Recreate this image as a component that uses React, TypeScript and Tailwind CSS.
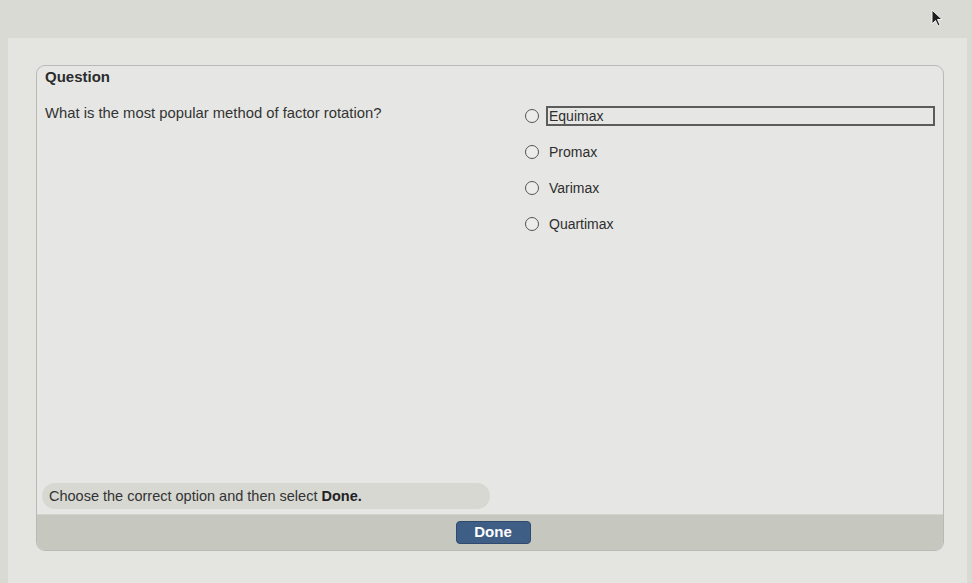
import React, { useState } from "react";

const options = ["Equimax", "Promax", "Varimax", "Quartimax"];

function Radio({ label, focused, checked, onSelect }: { label: string; focused: boolean; checked: boolean; onSelect: () => void }) {
  return (
    <button onClick={onSelect} className="flex items-center h-[20px] w-full text-left">
      <span className="w-[14px] h-[14px] rounded-full border-[1.5px] border-[#555] bg-[#ececea] flex items-center justify-center shrink-0">
        {checked && <span className="w-[7px] h-[7px] rounded-full bg-[#333]" />}
      </span>
      <span
        className={
          "ml-[7px] h-[20px] flex items-center text-[14px] text-[#2e2e2e] " +
          (focused ? "flex-1 border-2 border-[#5c5c5c] pl-[1px]" : "pl-[3px]")
        }
      >
        {label}
      </span>
    </button>
  );
}

export default function App() {
  const [selected, setSelected] = useState<number | null>(null);

  return (
    <div className="w-[972px] h-[583px] bg-[#d9dad3] flex flex-col overflow-hidden" style={{ fontFamily: '"Liberation Sans", Arial, sans-serif' }}>
      <div className="h-[38px] shrink-0 relative">
        <svg className="absolute left-[930px] top-[9px]" width="14" height="18" viewBox="0 0 14 18">
          <path d="M2 1 L2 15 L5.5 11.5 L8 17 L10 16 L7.5 10.5 L12 10.5 Z" fill="#1e1e1e" stroke="#f2f2f2" strokeWidth="1" />
        </svg>
      </div>
      <div className="flex-1 ml-[8px] mr-[5px] bg-[#e4e5e1] pl-[28px] pr-[23px] pt-[27px]">
        <div className="h-[486px] rounded-[9px] border border-[#b9bab5] bg-[#e6e7e4] flex flex-col overflow-hidden">
          <div className="flex-1 flex flex-col">
            <div className="flex-1 flex">
              <div className="w-[488px] pl-[8px] pt-[1px]">
                <div className="text-[15px] font-bold text-[#2c2c2c] h-[20px] flex items-center">Question</div>
                <div className="mt-[16px] text-[14.8px] text-[#333] h-[20px] flex items-center">What is the most popular method of factor rotation?</div>
              </div>
              <div className="flex-1 pt-[40px] pr-[8px] flex flex-col gap-[16px]">
                {options.map((o, i) => (
                  <Radio key={o} label={o} focused={i === 0} checked={selected === i} onSelect={() => setSelected(i)} />
                ))}
              </div>
            </div>
            <div className="px-[5px] pb-[5px]">
              <div className="w-[448px] h-[26px] rounded-full bg-[#d7d8d2] flex items-center pl-[7px] pt-[2px] text-[14.5px] text-[#333]">
                Choose the correct option and then select&nbsp;<b className="text-[#222]">Done.</b>
              </div>
            </div>
          </div>
          <div className="h-[36px] shrink-0 bg-[#c6c7bf] border-t border-[#d2d3cc] flex items-center justify-center pl-[6px]">
            <button className="w-[75px] h-[23px] rounded-[4px] bg-[#3f5e86] border border-[#2f4a6e] text-white font-bold text-[15px] flex items-center justify-center">
              Done
            </button>
          </div>
        </div>
      </div>
    </div>
  );
}
